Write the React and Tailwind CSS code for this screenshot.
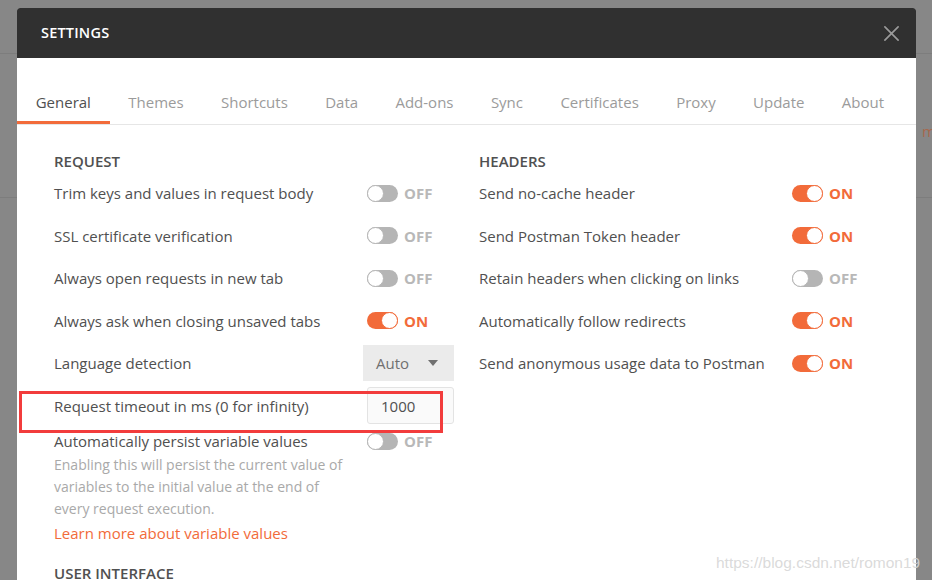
import React from 'react';

const tabs = ['General', 'Themes', 'Shortcuts', 'Data', 'Add-ons', 'Sync', 'Certificates', 'Proxy', 'Update', 'About'];

function Toggle({ on }) {
  return (
    <div className="flex items-center gap-[6px] pl-[4px]">
      <div className={`w-[31px] h-[17px] rounded-full flex items-center ${on ? 'bg-[#f26b3a] justify-end' : 'bg-[#b5b5b5] justify-start'}`}>
        <div className={`w-[17px] h-[17px] rounded-full bg-white border-[1.5px] ${on ? 'border-[#f26b3a]' : 'border-[#b5b5b5]'}`} />
      </div>
      <span className={`text-[15px] font-bold ${on ? 'text-[#f26b3a]' : 'text-[#b8b8b8]'}`}>{on ? 'ON' : 'OFF'}</span>
    </div>
  );
}

function Row({ label, children }) {
  return (
    <div className="h-[42.5px] flex items-center">
      <div className="w-[309px] shrink-0">{label}</div>
      <div className="w-[91px]">{children}</div>
    </div>
  );
}

export default function App() {
  return (
    <div className="relative w-[932px] h-[580px] overflow-hidden bg-[#878787]" style={{ fontFamily: '"Open Sans", "Noto Sans", sans-serif' }}>
      {/* page behind the overlay */}
      <div className="absolute left-0 right-0 top-[53px] h-px bg-[#7d7d7d]" />
      <div className="absolute left-0 right-0 top-[197px] h-px bg-[#7d7d7d]" />
      <span className="absolute left-[922px] top-[124px] text-[15px] leading-none text-[#a8684c]">m</span>

      {/* modal */}
      <div className="absolute left-[17px] top-[8px] w-[899px] h-[600px] bg-white rounded-t-[3px] overflow-hidden">
        <div className="h-[50px] bg-[#303030] flex items-center justify-between pl-[24px] pr-[16px]">
          <span className="text-white text-[14.5px] font-semibold tracking-[0.2px]">SETTINGS</span>
          <svg width="17" height="17" viewBox="0 0 18 18" className="text-[#9a9a9a]">
            <path d="M2 2 L16 16 M16 2 L2 16" stroke="currentColor" strokeWidth="1.8" strokeLinecap="round" />
          </svg>
        </div>

        <div className="pt-[27px] border-b border-[#e6e6e6] flex">
          {tabs.map((t, i) => (
            <div key={t} className={`px-[18.7px] h-[39px] pb-[1px] flex items-center text-[15px] ${i === 0 ? 'text-[#505050] border-b-[3px] border-[#f26b3a]' : 'text-[#9b9b9b] border-b-[3px] border-transparent'}`}>
              {t}
            </div>
          ))}
        </div>

        <div className="pl-[37px] pt-[26px] text-[15px] text-[#505050]">
          <div className="grid grid-cols-[400px_400px] gap-x-[25px]">
            <div>
              <div className="h-[20px] leading-[20px] font-semibold mb-[1px]">REQUEST</div>
              <Row label="Trim keys and values in request body"><Toggle on={false} /></Row>
              <Row label="SSL certificate verification"><Toggle on={false} /></Row>
              <Row label="Always open requests in new tab"><Toggle on={false} /></Row>
              <Row label="Always ask when closing unsaved tabs"><Toggle on={true} /></Row>
              <Row label="Language detection">
                <div className="h-[36px] bg-[#ebebeb] flex items-center justify-between pl-[13px] pr-[16px] text-[#707070]">
                  <span>Auto</span>
                  <svg width="10" height="6" viewBox="0 0 10 6"><path d="M0 0 L10 0 L5 6 Z" fill="#707070" /></svg>
                </div>
              </Row>
              <Row label="Request timeout in ms (0 for infinity)">
                <div className="ml-[4px] h-[37px] bg-[#fafafa] border border-[#e3e3e3] rounded-[3px] flex items-center pl-[13px] text-[#505050]">1000</div>
              </Row>
              <div className="pt-[3px]">
                <div className="flex items-center h-[22px]">
                  <div className="w-[309px] shrink-0">Automatically persist variable values</div>
                  <Toggle on={false} />
                </div>
                <p className="mt-[2px] w-[292px] text-[14px] leading-[22px] text-[#a9a9a9]">
                  Enabling this will persist the current value of variables to the initial value at the end of every request execution.
                </p>
                <p className="mt-[2px] leading-[22px] text-[#f26b3a]">Learn more about variable values</p>
              </div>
              <div className="mt-[19px] font-semibold leading-[20px]">USER INTERFACE</div>
            </div>
            <div>
              <div className="h-[20px] leading-[20px] font-semibold mb-[1px]">HEADERS</div>
              <Row label="Send no-cache header"><Toggle on={true} /></Row>
              <Row label="Send Postman Token header"><Toggle on={true} /></Row>
              <Row label="Retain headers when clicking on links"><Toggle on={false} /></Row>
              <Row label="Automatically follow redirects"><Toggle on={true} /></Row>
              <Row label="Send anonymous usage data to Postman"><Toggle on={true} /></Row>
            </div>
          </div>
        </div>
      </div>

      {/* annotation box */}
      <div className="absolute left-[19px] top-[391px] w-[424px] h-[42px] border-[3px] border-[#f23c3c]" />

      {/* watermark */}
      <span className="absolute left-[716px] top-[551px] text-[15.5px] text-[#d6d6d6]/90" style={{ fontFamily: '"Liberation Sans", Arial, sans-serif' }}>https://blog.csdn.net/romon19</span>
    </div>
  );
}
